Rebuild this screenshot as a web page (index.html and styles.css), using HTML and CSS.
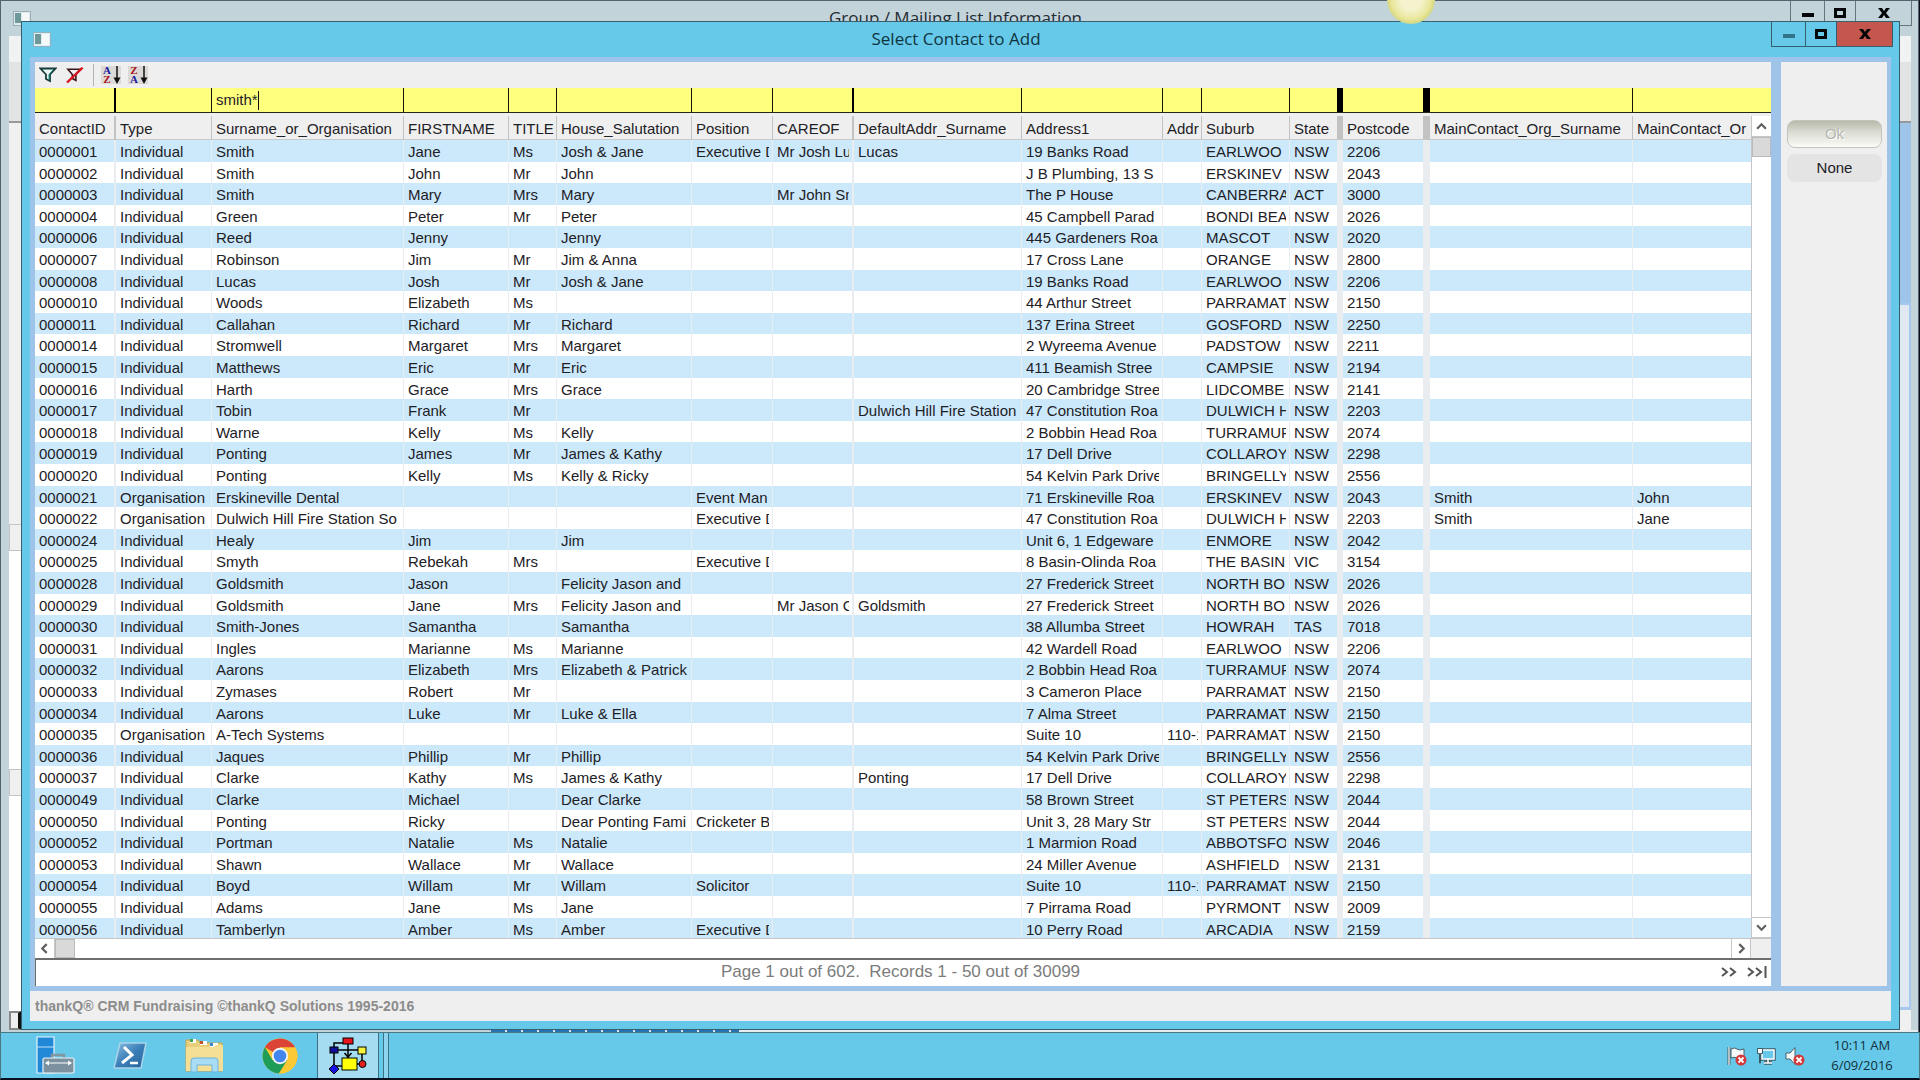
FILE: index.html
```html
<!DOCTYPE html>
<html lang="en">
<head>
<meta charset="utf-8">
<title>Select Contact to Add</title>
<link rel="stylesheet" href="styles.css">
</head>
<body>
<main class="desktop">
  <section class="window window-back" aria-label="Group / Mailing List Information">
    <header class="titlebar">
      <svg class="app-icon" viewBox="0 0 18 15"><rect x=".5" y=".5" width="17" height="14" fill="#dfe8ea" stroke="#9aaeb4"/><rect x="2" y="2" width="6" height="10" fill="#6d9a98"/><rect x="9" y="2" width="7" height="11" fill="#f4f8f8"/></svg>
      <h2 class="title">Group / Mailing List Information</h2>
      <div class="window-buttons">
        <button class="wb wb-min" aria-label="Minimize"><svg viewBox="0 0 12 10"><path d="M0 5h12v4H0z"/></svg></button>
        <button class="wb" aria-label="Maximize"><svg viewBox="0 0 12 10"><path d="M0 0h12v10H0zM3 3v4h6V3z" fill-rule="evenodd"/></svg></button>
        <button class="wb wb-close" aria-label="Close"><svg viewBox="0 0 12 10"><path d="M0 0h4l2 3 2-3h4L8 5l4 5H8L6 7l-2 3H0l4-5z"/></svg></button>
      </div>
    </header>
    <div class="back-body">
      <div class="back-left"><i class="bl-tabs"></i><i class="bl-bar"></i><i class="bl-panel"></i><i class="bl-head"></i><i class="bl-list"></i><i class="bl-head"></i><i class="bl-rest"></i><i class="bl-foot"></i></div>
      <div class="back-right"><i class="br-tabs"></i><i class="br-bar"></i><i class="br-blue"></i><i class="br-pane"></i><i class="br-foot"></i></div>
    </div>
    <div class="back-edge"></div>
  </section>

  <section class="window window-front" aria-label="Select Contact to Add">
    <header class="titlebar">
      <svg class="app-icon" viewBox="0 0 18 15"><rect x=".5" y=".5" width="17" height="14" fill="#dfeef2" stroke="#8fb4bf"/><rect x="2" y="2" width="6" height="10" fill="#6d9a98"/><rect x="9" y="2" width="7" height="11" fill="#f4fafa"/></svg>
      <h1 class="title">Select Contact to Add</h1>
      <div class="window-buttons">
        <button class="wb wb-min wb-dim" aria-label="Minimize"><svg viewBox="0 0 12 10"><path d="M0 5h12v4H0z"/></svg></button>
        <button class="wb" aria-label="Maximize"><svg viewBox="0 0 12 10"><path d="M0 0h12v10H0zM3 3v4h6V3z" fill-rule="evenodd"/></svg></button>
        <button class="wb wb-close" aria-label="Close"><svg viewBox="0 0 12 10"><path d="M0 0h4l2 3 2-3h4L8 5l4 5H8L6 7l-2 3H0l4-5z"/></svg></button>
      </div>
    </header>

    <div class="client">
      <div class="work">
        <div class="browser">
          <div class="toolbar">
            <button class="tool" aria-label="Filter"><svg viewBox="0 0 18 16"><path d="M1.500 1.500h15l-5.500 6v6.500l-4-2V7.500z" fill="#e9f6f4" stroke="#163c3c" stroke-width="1.800"/><path d="M14 3l-4 4.500V13" fill="none" stroke="#1d8a80"/></svg></button>
            <button class="tool" aria-label="Clear filter"><svg viewBox="0 0 20 18"><path d="M2 2.500h14l-5 6V15l-4-2V8.500z" fill="#eee" stroke="#3a1518" stroke-width="1.800"/><path d="M1 17.500L18.500.8" stroke="#d8121c" stroke-width="2.600"/></svg></button>
            <span class="tool-sep"></span>
            <button class="tool tool-sort" aria-label="Sort ascending"><span class="letters"><b class="a">A</b><b class="z">Z</b></span><svg viewBox="0 0 8 18"><path d="M4 0v14" stroke="#111" stroke-width="1.500"/><path d="M.5 11.500h7L4 18z" fill="#111"/></svg></button>
            <button class="tool tool-sort" aria-label="Sort descending"><span class="letters"><b class="z">Z</b><b class="a">A</b></span><svg viewBox="0 0 8 18"><path d="M4 0v14" stroke="#111" stroke-width="1.500"/><path d="M.5 11.500h7L4 18z" fill="#111"/></svg></button>
          </div>
          <div class="filters" id="filters"></div>
          <div class="grid-area">
            <div class="table-clip">
              <table class="contacts">
                <colgroup id="cols"></colgroup>
                <thead><tr id="heads"></tr></thead>
                <tbody id="rows"></tbody>
              </table>
            </div>
            <div class="vscroll">
              <button class="sb" aria-label="Scroll up"><svg viewBox="0 0 10 10"><path d="M1 7l4-4 4 4"/></svg></button>
              <span class="thumb"></span>
              <span class="track"></span>
              <button class="sb" aria-label="Scroll down"><svg viewBox="0 0 10 10"><path d="M1 3l4 4 4-4"/></svg></button>
            </div>
          </div>
          <div class="hscroll">
            <button class="sb" aria-label="Scroll left"><svg viewBox="0 0 10 10"><path d="M7 1L3 5l4 4"/></svg></button>
            <span class="thumb"></span>
            <span class="track"></span>
            <button class="sb" aria-label="Scroll right"><svg viewBox="0 0 10 10"><path d="M3 1l4 4-4 4"/></svg></button>
            <span class="corner"></span>
          </div>
          <div class="pager">
            <span class="pager-text">Page 1 out of 602.&nbsp; Records 1 - 50 out of 30099</span>
            <button class="pg" aria-label="Next page"><svg width="16" height="12" viewBox="0 0 16 12"><path d="M1 2l5 4-5 4M9 2l5 4-5 4"/></svg></button>
            <button class="pg" aria-label="Last page"><svg width="20" height="12" viewBox="0 0 20 12"><path d="M1 2l5 4-5 4M9 2l5 4-5 4M18.500 0v12"/></svg></button>
          </div>
        </div>
        <aside class="actions">
          <button class="action action-ok" disabled>Ok</button>
          <button class="action">None</button>
        </aside>
      </div>
      <footer class="status">thankQ® CRM Fundraising ©thankQ Solutions 1995-2016</footer>
    </div>
  </section>
  <div class="pointer-glow"></div>
</main>

<nav class="taskbar" aria-label="Taskbar">
  <button class="task" aria-label="Server Manager"><svg width="40" height="40" viewBox="0 0 40 40"><path d="M2 1h17v36H2z" fill="#2188d8" stroke="#e6f4fb" stroke-width="1.200"/><path d="M2 11h17" stroke="#bfe2f6"/><path d="M17 22v-3h12v3" fill="none" stroke="#8296a2" stroke-width="2.500"/><rect x="8" y="22" width="31" height="15" rx="1.500" fill="#7c919f" stroke="#eef5f8" stroke-width="1.200"/><path d="M11 27h25" stroke="#fff"/><path d="M10 27l4-2.500v5zM37 27l-4-2.500v5z" fill="#fff"/></svg></button>
  <button class="task" aria-label="PowerShell"><svg width="40" height="40" viewBox="0 0 40 40"><defs><linearGradient id="ps" x2="1" y2="1"><stop offset="0" stop-color="#8cbfe2"/><stop offset=".5" stop-color="#3b7fb8"/><stop offset="1" stop-color="#2a6199"/></linearGradient></defs><path d="M10 7h26l-5 25H4z" fill="url(#ps)" stroke="#a9d4ea" stroke-width="1.500" stroke-linejoin="round"/><path d="M14 11l8 8-10 8" fill="none" stroke="#fff" stroke-width="3"/><path d="M20 27h8" stroke="#fff" stroke-width="2.500"/></svg></button>
  <button class="task" aria-label="File Explorer"><svg width="40" height="40" viewBox="0 0 40 40"><path d="M1 4h12l2 3h22v28H1z" fill="#e9cf7c" stroke="#c9a750"/><path d="M5 3h6v4H5z" fill="#fff"/><path d="M5 3h3v3H5z" fill="#3aa651"/><path d="M15 5h7v4h-7z" fill="#fff"/><path d="M15 5h3v3h-3z" fill="#c4502c"/><path d="M25 7h8v4h-8z" fill="#fff"/><path d="M25 7h3v3h-3z" fill="#3d86c9"/><path d="M1 11h27l3-2h7v26H1z" fill="#f5df95"/><path d="M6 36V25q0-3 3-3h21q3 0 3 3v11h-6v-7H12v7z" fill="#a9dcf5" stroke="#6cb4dc"/></svg></button>
  <button class="task" aria-label="Chrome"><svg width="40" height="40" viewBox="0 0 40 40"><circle cx="20" cy="20" r="17.500" fill="#fbc934"/><path d="M20 20L4.900 11.200A17.500 17.500 0 0 1 35.200 11.500H20z" fill="#dc4437"/><path d="M4.900 11.200A17.500 17.500 0 0 0 19 37.500L27.500 24 12.500 24z" fill="#1f9d58"/><path d="M19 37.500A17.500 17.500 0 0 0 35.200 11.500H20l7.500 12.500z" fill="#fbc934"/><circle cx="20" cy="20" r="8.200" fill="#f4f4f4"/><circle cx="20" cy="20" r="6.300" fill="#4486f0"/></svg></button>
  <button class="task task-active" aria-label="thankQ"><svg width="40" height="40" viewBox="0 0 40 40"><path d="M6 31V7h12M20 6v16M6 14h28v14h-6M6 30h8" fill="none" stroke="#000" stroke-width="1.500"/><path d="M16.500 17l3.500 4 3.500-4" fill="none" stroke="#000" stroke-width="1.500"/><g stroke="#000"><rect x="15" y="2" width="10" height="6" fill="#e8131b"/><rect x="2" y="11" width="8" height="6" fill="#10109a"/><rect x="30" y="11" width="8" height="7" fill="#f7f23a"/><rect x="14" y="22" width="15" height="12" fill="#ffff0a"/><path d="M6 28l5 5-5 5-5-5z" fill="#1414e0"/><circle cx="34.500" cy="28" r="3.500" fill="#e02020"/></g></svg></button>
  <span class="task-stack"></span>
  <span class="task-space"></span>
  <div class="tray">
    <svg width="20" height="20" viewBox="0 0 20 20"><path d="M2 1v18" stroke="#47606b" stroke-width="3"/><path d="M2 1v18" stroke="#fff" stroke-width="1.200"/><path d="M4 3q4-2 6 0t7 0v9q-4 1.500-7 0t-6 0z" fill="#f6fafb" stroke="#47606b"/><circle cx="14" cy="14" r="5.500" fill="#d23a3a"/><path d="M11.500 11.500l5 5M16.500 11.500l-5 5" stroke="#fff" stroke-width="1.800"/></svg>
    <svg width="20" height="20" viewBox="0 0 20 20"><g fill="none" stroke="#3b5a66" stroke-width="3.500"><rect x="6" y="4" width="12" height="9"/><path d="M12 13v4M8 17h8"/></g><g fill="none" stroke="#fff" stroke-width="1.500"><rect x="6" y="4" width="12" height="9" fill="#66c9e9"/><path d="M12 13v4M8 17h8"/></g><path d="M1.500 2.500h5v5h-2V17h-1V7.500h-2z" fill="#fff" stroke="#3b5a66"/></svg>
    <svg width="20" height="20" viewBox="0 0 20 20"><path d="M1 7h4l5-5.500v17L5 13H1z" fill="#f6fafb" stroke="#47606b"/><circle cx="14" cy="14" r="5.500" fill="#d23a3a"/><path d="M11.500 11.500l5 5M16.500 11.500l-5 5" stroke="#fff" stroke-width="1.800"/></svg>
  </div>
  <div class="clock"><span>10:11 AM</span><span>6/09/2016</span></div>
</nav>
<script src="grid.js"></script>
</body>
</html>
```
FILE: styles.css
```css
:root {
  --sky: #66c9e9;
  --edge: #9fc4ea;
  --face: #efefef;
  --ink: #1d2126;
  --cols: 81px 96px 192px 105px 48px 135px 81px 81px 168px 141px 39px 88px 53px 87px 203px 1fr;
}

* { box-sizing: border-box; }

body {
  margin: 0;
  height: 100vh;
  display: flex;
  flex-direction: column;
  overflow: hidden;
  background: #0b1020;
  font: 15px/20px "Liberation Sans", Arial, sans-serif;
  color: var(--ink);
}

button {
  margin: 0;
  padding: 0;
  border: 0;
  background: none;
  font: inherit;
  color: inherit;
}

svg { display: block; }

/* Windows */
.desktop {
  position: relative;
  flex: 1;
  min-height: 0;
  overflow: hidden;
}

.window {
  position: absolute;
  display: flex;
  flex-direction: column;
}

.window-back {
  inset: 0 1px 0 0;
  background: #c3d3da;
  border: solid #56626c;
  border-width: 1px 1px 0;
}

.window-front {
  inset: 21px 20px 2px 21px;
  background: var(--sky);
  border: 1px solid #35606e;
  padding: 0 6px 8px 8px;
}

.titlebar {
  display: flex;
  align-items: center;
  height: 35px;
  flex: none;
}

.window-back .titlebar { padding-left: 12px; }
.window-front .titlebar { padding-left: 3px; }

.title {
  flex: 1;
  margin: 0;
  padding-left: 90px;
  text-align: center;
  font: 17px/24px "Open Sans", "Noto Sans", sans-serif;
}

.window-front .title { padding-bottom: 2px; color: #0f3440; }
.window-back .title { padding-bottom: 2px; color: #222c32; }

.app-icon { width: 18px; height: 15px; }

.window-buttons {
  display: flex;
  align-self: flex-start;
  height: 25px;
  border: solid #35606e;
  border-width: 0 1px 1px;
}

.window-back .window-buttons { border-color: #66757d; margin-right: 6px; }

.wb {
  width: 31px;
  display: flex;
  align-items: center;
  justify-content: center;
  border-right: 1px solid #35606e;
}

.wb-min { width: 34px; }
.wb svg { width: 12px; height: 10px; fill: #050808; }
.window-back .wb { border-color: #66757d; }
.wb-close { width: 55px; border: 0; }
.window-front .wb-close { background: #c4564d; }
.wb-dim svg { fill: #2f7488; }

/* Parts of the list window that stay visible beside the dialog */
.back-body {
  flex: 1;
  min-height: 0;
  display: flex;
  justify-content: space-between;
  margin: 0 7px 0 8px;
  background: #fff;
}

.back-left, .back-right {
  display: flex;
  flex-direction: column;
  width: 13px;
}

.bl-tabs, .br-tabs { height: 26px; background: #f1f2f3; }
.bl-bar, .br-bar { height: 61px; background: #e2e3e4; border-bottom: 2px solid #999; }
.bl-panel { height: 401px; background: #f0f0f0; }
.bl-head { height: 27px; background: #f0f0f0; border: 1px solid #c4c4c4; }
.bl-list { height: 218px; background: #fff; }
.bl-rest { flex: 1; background: #fff; }
.bl-foot { height: 19px; background: #eee; border: 2px solid #888; border-right: 4px solid #111; }
.br-blue { height: 180px; background: var(--edge); }
.br-pane { flex: 1; background: #e0e8f2; border: solid #a5c8ec; border-width: 2px 2px 3px 0; }
.br-foot { height: 20px; background: #f0f0f0; }

.back-edge {
  height: 2px;
  margin: 0 0 0 490px;
  background: repeating-linear-gradient(90deg, #2673b4 0 14px, #d6e8f4 14px 16px) 0 0 / 248px 2px no-repeat, #e8eef0;
}

/* Dialog body */
.client {
  flex: 1;
  min-height: 0;
  display: flex;
  flex-direction: column;
  margin-right: 2px;
}

.work {
  flex: 1;
  min-height: 0;
  display: flex;
  gap: 10px;
  padding: 5px 4px 5px 5px;
  background: var(--edge);
}

.browser {
  flex: 1;
  min-width: 0;
  display: flex;
  flex-direction: column;
  background: var(--face);
}

.toolbar {
  height: 26px;
  flex: none;
  display: flex;
  align-items: center;
  gap: 7px;
  padding: 0 4px;
}

.tool { width: 20px; height: 18px; }
.tool svg { width: 18px; height: 16px; }
.tool-sep { width: 1px; height: 22px; background: #b4b4b4; }

.tool-sort {
  display: flex;
  background: #dcd9d6;
}

.tool-sort svg { width: 8px; height: 18px; }

.letters {
  display: flex;
  flex-direction: column;
  width: 12px;
  font: bold 11px/9px "Liberation Serif", "Times New Roman", serif;
}

.a { color: #1a1a9c; }
.z { color: #a81420; }

.filters {
  flex: none;
  display: grid;
  grid-template-columns: var(--cols);
  height: 25px;
  background: #ffff7e;
  border-bottom: 1px solid #26261a;
}

.filter-cell {
  display: flex;
  align-items: center;
  min-width: 0;
  padding-left: 4px;
  border-right: 1px solid #16160c;
}

.filter-cell:nth-child(1), .filter-cell:nth-child(8) { border-right: 2px solid #000; }
.filter-cell:nth-child(13) { border-right: 6px solid #000; }
.filter-cell:nth-child(14) { border-right: 7px solid #000; }
.filter-cell:last-child { border-right: 0; }

.filter-input {
  min-width: 0;
  width: 100%;
  padding: 0;
  border: 0;
  outline: 0;
  background: transparent;
  font: inherit;
  color: inherit;
}

.filter-active .filter-input { width: auto; field-sizing: content; caret-color: transparent; }
.caret { width: 1px; height: 19px; background: #111; }

.grid-area {
  flex: 1;
  min-height: 0;
  display: flex;
  padding-top: 3px;
}

.table-clip {
  flex: 1;
  min-width: 0;
  overflow: hidden;
  background: #fff;
}

.contacts {
  width: 100%;
  table-layout: fixed;
  border-collapse: separate;
  border-spacing: 0;
}

.contacts th, .contacts td {
  padding: 2px 3px 0 4px;
  text-align: left;
  font-weight: normal;
  border-right: 1px solid #e9edf0;
}

.contacts th {
  height: 24px;
  padding-right: 0;
  background: var(--face);
  border-right-color: #c2c2c2;
  border-bottom: 1px solid #c6cacc;
}

.contacts th:nth-child(1), .contacts td:nth-child(1),
.contacts th:nth-child(8), .contacts td:nth-child(8) { border-right-width: 2px; }
.contacts th:nth-child(13), .contacts td:nth-child(13) { border-right-width: 6px; }
.contacts th:nth-child(14), .contacts td:nth-child(14) { border-right-width: 7px; }
.contacts th:last-child, .contacts td:last-child { border-right: 0; padding-right: 0; }

.contacts td { height: 22px; }
.contacts tbody tr:nth-child(5n+2) td, .contacts tbody tr:nth-child(5n+4) td { height: 21px; }
.contacts tbody tr:nth-child(odd) { background: #cce9fc; }

.cell {
  display: block;
  overflow: hidden;
  white-space: nowrap;
  line-height: 18px;
}

/* Scroll bars */
.vscroll {
  width: 20px;
  display: flex;
  flex-direction: column;
  background: #fff;
  border-left: 1px solid #c6c6c6;
}

.hscroll {
  height: 20px;
  flex: none;
  display: flex;
  background: #fff;
  border-top: 1px solid #c6c6c6;
}

.sb {
  width: 20px;
  height: 20px;
  display: flex;
  align-items: center;
  justify-content: center;
  background: #fff;
}

.vscroll .sb { width: 19px; height: 21px; border-bottom: 1px solid #c6c6c6; }
.vscroll .track + .sb { border-top: 1px solid #c6c6c6; }
.hscroll .sb { height: 19px; border-right: 1px solid #c6c6c6; }
.hscroll .track + .sb { border-left: 1px solid #c6c6c6; }
.sb svg { width: 11px; height: 11px; fill: none; stroke: #606060; stroke-width: 2; }
.thumb { width: 20px; height: 20px; background: #d9d9d9; border: 1px solid #bababa; }
.vscroll .thumb { width: 19px; }
.hscroll .thumb { height: 19px; }
.track { flex: 1; }
.corner { width: 20px; background: var(--face); }

.pager {
  height: 28px;
  flex: none;
  display: flex;
  align-items: center;
  gap: 10px;
  padding: 0 4px 2px 0;
  background: #fff;
  border: solid #6e6e6e;
  border-width: 2px 0 0 1px;
  color: #7c7c7c;
  font-size: 17px;
}

.pager-text { flex: 1; text-align: center; padding-left: 54px; }
.pg svg { fill: none; stroke: #555; stroke-width: 2; }

.actions {
  width: 106px;
  display: flex;
  flex-direction: column;
  gap: 6px;
  padding: 58px 5px 0 6px;
  background: var(--face);
}

.action {
  height: 28px;
  border-radius: 8px;
  background: #e4e4e4;
  font-size: 15px;
}

.action-ok {
  border: 1px solid #c3c5bc;
  background: linear-gradient(#b8baac, #dcddd4 45%, #fbfbf8);
  color: #b5b5b0;
  text-shadow: 1px 1px #fff;
}

.status {
  height: 30px;
  flex: none;
  padding: 5px;
  background: var(--face);
  color: #8c8c8c;
  font-size: 14px;
  font-weight: bold;
}

.pointer-glow {
  position: absolute;
  top: -24px;
  right: 485px;
  width: 48px;
  height: 48px;
  border-radius: 50%;
  background: radial-gradient(circle, #f4f3cd 0 30%, #e9e69a 58%, #dcdc84 66%, #c9d79a 71%);
}

/* Taskbar */
.taskbar {
  height: 48px;
  flex: none;
  display: flex;
  background: var(--sky);
  border: solid #4b7885;
  border-width: 1px 1px 0;
  border-bottom: 2px solid #0b1020;
  padding-left: 23px;
}

.task {
  width: 62px;
  margin-right: 13px;
  display: flex;
  align-items: center;
  justify-content: center;
}

.task:nth-child(4) { margin-right: 6px; }

.task-active {
  margin-right: 4px;
  background: #a5dcf1;
  border: solid #3d7182;
  border-width: 0 1px;
}

.task-stack {
  width: 6px;
  background: #8dd5ee;
  border: solid #3d7182;
  border-width: 0 1px;
}

.task-space { flex: 1; }

.tray {
  display: flex;
  align-items: center;
  gap: 9px;
}

.clock {
  width: 114px;
  padding-top: 2px;
  display: flex;
  flex-direction: column;
  align-items: center;
  font: 13px/20px "Open Sans", "Noto Sans", sans-serif;
  color: #12303a;
}
```
FILE: grid.js
```js
const columns = [
  ["ContactID", 81], ["Type", 96], ["Surname_or_Organisation", 192], ["FIRSTNAME", 105],
  ["TITLE", 48], ["House_Salutation", 135], ["Position", 81], ["CAREOF", 81],
  ["DefaultAddr_Surname", 168], ["Address1", 141], ["Addr", 39], ["Suburb", 88],
  ["State", 53], ["Postcode", 87], ["MainContact_Org_Surname", 203], ["MainContact_Or", 0]
];

// id|type|surname|first|title|salutation|position|careof|default surname|address1|address2|suburb|state|postcode|main surname|main first
const records = `
0000001|I|Smith|Jane|Ms|Josh & Jane|Executive D|Mr Josh Lu|Lucas|19 Banks Road||EARLWOO|NSW|2206
0000002|I|Smith|John|Mr|John||||J B Plumbing, 13 S||ERSKINEV|NSW|2043
0000003|I|Smith|Mary|Mrs|Mary||Mr John Sm||The P House||CANBERRA|ACT|3000
0000004|I|Green|Peter|Mr|Peter||||45 Campbell Parad||BONDI BEA|NSW|2026
0000006|I|Reed|Jenny||Jenny||||445 Gardeners Roa||MASCOT|NSW|2020
0000007|I|Robinson|Jim|Mr|Jim & Anna||||17 Cross Lane||ORANGE|NSW|2800
0000008|I|Lucas|Josh|Mr|Josh & Jane||||19 Banks Road||EARLWOO|NSW|2206
0000010|I|Woods|Elizabeth|Ms|||||44 Arthur Street||PARRAMAT|NSW|2150
0000011|I|Callahan|Richard|Mr|Richard||||137 Erina Street||GOSFORD|NSW|2250
0000014|I|Stromwell|Margaret|Mrs|Margaret||||2 Wyreema Avenue||PADSTOW|NSW|2211
0000015|I|Matthews|Eric|Mr|Eric||||411 Beamish Stree||CAMPSIE|NSW|2194
0000016|I|Harth|Grace|Mrs|Grace||||20 Cambridge Stree||LIDCOMBE|NSW|2141
0000017|I|Tobin|Frank|Mr||||Dulwich Hill Fire Station|47 Constitution Roa||DULWICH H|NSW|2203
0000018|I|Warne|Kelly|Ms|Kelly||||2 Bobbin Head Roa||TURRAMUR|NSW|2074
0000019|I|Ponting|James|Mr|James & Kathy||||17 Dell Drive||COLLAROY|NSW|2298
0000020|I|Ponting|Kelly|Ms|Kelly & Ricky||||54 Kelvin Park Drive||BRINGELLY|NSW|2556
0000021|O|Erskineville Dental||||Event Man|||71 Erskineville Roa||ERSKINEV|NSW|2043|Smith|John
0000022|O|Dulwich Hill Fire Station So||||Executive D|||47 Constitution Roa||DULWICH H|NSW|2203|Smith|Jane
0000024|I|Healy|Jim||Jim||||Unit 6, 1 Edgeware||ENMORE|NSW|2042
0000025|I|Smyth|Rebekah|Mrs||Executive D|||8 Basin-Olinda Roa||THE BASIN|VIC|3154
0000028|I|Goldsmith|Jason||Felicity Jason and||||27 Frederick Street||NORTH BO|NSW|2026
0000029|I|Goldsmith|Jane|Mrs|Felicity Jason and||Mr Jason G|Goldsmith|27 Frederick Street||NORTH BO|NSW|2026
0000030|I|Smith-Jones|Samantha||Samantha||||38 Allumba Street||HOWRAH|TAS|7018
0000031|I|Ingles|Marianne|Ms|Marianne||||42 Wardell Road||EARLWOO|NSW|2206
0000032|I|Aarons|Elizabeth|Mrs|Elizabeth & Patrick||||2 Bobbin Head Roa||TURRAMUR|NSW|2074
0000033|I|Zymases|Robert|Mr|||||3 Cameron Place||PARRAMAT|NSW|2150
0000034|I|Aarons|Luke|Mr|Luke & Ella||||7 Alma Street||PARRAMAT|NSW|2150
0000035|O|A-Tech Systems|||||||Suite 10|110-1|PARRAMAT|NSW|2150
0000036|I|Jaques|Phillip|Mr|Phillip||||54 Kelvin Park Drive||BRINGELLY|NSW|2556
0000037|I|Clarke|Kathy|Ms|James & Kathy|||Ponting|17 Dell Drive||COLLAROY|NSW|2298
0000049|I|Clarke|Michael||Dear Clarke||||58 Brown Street||ST PETERS|NSW|2044
0000050|I|Ponting|Ricky||Dear Ponting Fami|Cricketer B|||Unit 3, 28 Mary Str||ST PETERS|NSW|2044
0000052|I|Portman|Natalie|Ms|Natalie||||1 Marmion Road||ABBOTSFO|NSW|2046
0000053|I|Shawn|Wallace|Mr|Wallace||||24 Miller Avenue||ASHFIELD|NSW|2131
0000054|I|Boyd|Willam|Mr|Willam|Solicitor|||Suite 10|110-1|PARRAMAT|NSW|2150
0000055|I|Adams|Jane|Ms|Jane||||7 Pirrama Road||PYRMONT|NSW|2009
0000056|I|Tamberlyn|Amber|Ms|Amber|Executive D|||10 Perry Road||ARCADIA|NSW|2159`.trim().split("\n");

const types = { I: "Individual", O: "Organisation" };
const byId = id => document.getElementById(id);

function cell(tag, text) {
  const el = document.createElement(tag);
  const span = document.createElement("span");
  span.className = "cell";
  span.textContent = text || "";
  el.append(span);
  return el;
}

columns.forEach(([name, width], i) => {
  const col = document.createElement("col");
  if (width) col.style.width = width + "px";
  byId("cols").append(col);
  const th = cell("th", name);
  th.scope = "col";
  byId("heads").append(th);

  const box = document.createElement("div");
  box.className = "filter-cell";
  const input = document.createElement("input");
  input.className = "filter-input";
  input.type = "text";
  input.setAttribute("aria-label", "Filter " + name);
  box.append(input);
  if (i === 2) {
    input.value = "smith*";
    box.classList.add("filter-active");
    const caret = document.createElement("span");
    caret.className = "caret";
    box.append(caret);
  }
  byId("filters").append(box);
});

records.forEach(line => {
  const values = line.split("|");
  values[1] = types[values[1]];
  const tr = document.createElement("tr");
  columns.forEach((_, i) => tr.append(cell("td", values[i])));
  byId("rows").append(tr);
});
```
